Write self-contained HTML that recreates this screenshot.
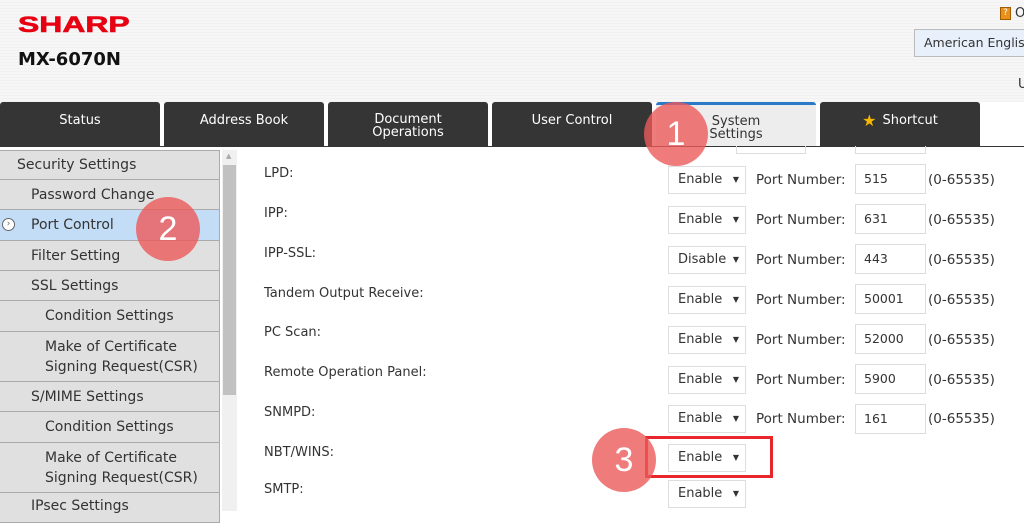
<!DOCTYPE html>
<html><head><style>
*{margin:0;padding:0;box-sizing:border-box}
body{width:1024px;height:511px;overflow:hidden;position:relative;background:#fff;font-family:"DejaVu Sans","Liberation Sans",sans-serif;color:#333}
.hdr{position:absolute;left:0;top:0;width:1024px;height:102px;background:repeating-linear-gradient(#f6f6f6 0 2px,#f1f1f1 2px 3px)}
.abs{position:absolute}
.tab{position:absolute;top:102px;height:44px;width:160px;background:#353535;color:#fff;font-size:13px;text-align:center;border-radius:3px 3px 0 0;line-height:13px;display:flex;align-items:center;justify-content:center;padding-bottom:8px}
.tab.two{padding-bottom:0;padding-top:4px}
.menu{position:absolute;left:0;width:220px;background:#e0e0e0;border-bottom:1px solid #aaa;border-right:1px solid #aaa;font-size:14px;color:#333;display:flex;align-items:center}
.lbl{position:absolute;left:264px;font-size:13px;color:#333}
.sel{position:absolute;left:668px;width:78px;height:28px;border:1px solid #ddd;font-size:13px;color:#333;padding-left:9px;line-height:26px;background:#fff}
.sel:after{content:"▼";position:absolute;right:6px;font-size:8px;top:0}
.pn{position:absolute;left:756px;font-size:13.5px;color:#333}
.inp{position:absolute;left:855px;width:71px;height:30px;border:1px solid #ddd;font-size:12.5px;padding-left:8px;line-height:28px;color:#333}
.rng{position:absolute;left:928px;font-size:13.5px;color:#333}
.circ{position:absolute;width:64px;height:64px;border-radius:50%;background:rgba(236,90,90,0.8);color:#fff;font-size:34px;text-align:center;line-height:64px;font-family:"Liberation Sans",sans-serif}
</style></head><body>
<div class="hdr"></div>
<div class="abs" style="left:18px;top:12px;font:900 22px 'Liberation Sans',sans-serif;color:#e60012;transform:scaleX(1.45);transform-origin:0 0;-webkit-text-stroke:0.6px #e60012">SHARP</div>
<div class="abs" style="left:18px;top:49px;font:bold 18px 'DejaVu Sans',sans-serif;color:#111">MX-6070N</div>
<div class="abs" style="left:1000px;top:7px;width:11px;height:13px;background:#e8901a;border:1px solid #a05a00;color:#fff;font-size:9px;text-align:center;line-height:11px">?</div>
<div class="abs" style="left:1015px;top:6px;font-size:13px">O</div>
<div class="abs" style="left:914px;top:29px;width:120px;height:28px;background:#e8f0fb;border:1px solid #bbb;font-size:12.5px;padding-left:9px;line-height:26px">American English</div>
<div class="abs" style="left:1018px;top:77px;font-size:13px">U</div>

<div class="tab" style="left:0">Status</div>
<div class="tab" style="left:164px">Address Book</div>
<div class="tab two" style="left:328px">Document<br>Operations</div>
<div class="tab" style="left:492px">User Control</div>
<div class="tab two" style="left:656px;background:#ededed;color:#333;border-top:3px solid #2a7ac8">System<br>Settings</div>
<div class="tab" style="left:820px"><span style="color:#f5b800;font-size:16px;margin-right:6px">★</span>Shortcut</div>
<div class="abs" style="left:0;top:146px;width:1024px;height:1px;background:#353535"></div>

<div class="menu" style="top:150px;height:30px;padding-left:17px;border-top:1px solid #aaa">Security Settings</div>
<div class="menu" style="top:180px;height:30px;padding-left:31px">Password Change</div>
<div class="menu" style="top:210px;height:31px;padding-left:31px;background:#c3ddf6">Port Control</div>
<div class="abs" style="left:2px;top:218px;width:13px;height:13px;border-radius:50%;border:1.5px solid #666;background:#fff;font-size:9px;line-height:10px;text-align:center;color:#666">›</div>
<div class="menu" style="top:241px;height:30px;padding-left:31px">Filter Setting</div>
<div class="menu" style="top:271px;height:30px;padding-left:31px">SSL Settings</div>
<div class="menu" style="top:301px;height:31px;padding-left:45px">Condition Settings</div>
<div class="menu" style="top:332px;height:50px;padding-left:45px;line-height:20px">Make of Certificate<br>Signing Request(CSR)</div>
<div class="menu" style="top:382px;height:30px;padding-left:31px">S/MIME Settings</div>
<div class="menu" style="top:412px;height:31px;padding-left:45px">Condition Settings</div>
<div class="menu" style="top:443px;height:50px;padding-left:45px;line-height:20px">Make of Certificate<br>Signing Request(CSR)</div>
<div class="menu" style="top:493px;height:30px;padding-left:31px;align-items:flex-start;padding-top:5px">IPsec Settings</div>
<div class="abs" style="left:222px;top:150px;width:15px;height:361px;background:#f0f0f0"></div>
<div class="abs" style="left:223px;top:165px;width:13px;height:230px;background:#c1c1c1"></div>
<div class="abs" style="left:226px;top:152px;font-size:7px;color:#aaa">▲</div>

<div class="abs" style="left:736px;top:146px;width:70px;height:8px;border:1px solid #ddd;border-top:none"></div>
<div class="abs" style="left:855px;top:146px;width:71px;height:8px;border:1px solid #ddd;border-top:none"></div>

<div class="lbl" style="top:166px">LPD:</div>
<div class="sel" style="top:166px">Enable</div><div class="pn" style="top:172px">Port Number:</div><div class="inp" style="top:164px">515</div><div class="rng" style="top:172px">(0-65535)</div>
<div class="lbl" style="top:206px">IPP:</div>
<div class="sel" style="top:206px">Enable</div><div class="pn" style="top:212px">Port Number:</div><div class="inp" style="top:204px">631</div><div class="rng" style="top:212px">(0-65535)</div>
<div class="lbl" style="top:246px">IPP-SSL:</div>
<div class="sel" style="top:246px">Disable</div><div class="pn" style="top:252px">Port Number:</div><div class="inp" style="top:244px">443</div><div class="rng" style="top:252px">(0-65535)</div>
<div class="lbl" style="top:286px">Tandem Output Receive:</div>
<div class="sel" style="top:286px">Enable</div><div class="pn" style="top:292px">Port Number:</div><div class="inp" style="top:284px">50001</div><div class="rng" style="top:292px">(0-65535)</div>
<div class="lbl" style="top:325px">PC Scan:</div>
<div class="sel" style="top:326px">Enable</div><div class="pn" style="top:332px">Port Number:</div><div class="inp" style="top:324px">52000</div><div class="rng" style="top:332px">(0-65535)</div>
<div class="lbl" style="top:365px">Remote Operation Panel:</div>
<div class="sel" style="top:366px">Enable</div><div class="pn" style="top:372px">Port Number:</div><div class="inp" style="top:364px">5900</div><div class="rng" style="top:372px">(0-65535)</div>
<div class="lbl" style="top:405px">SNMPD:</div>
<div class="sel" style="top:405px">Enable</div><div class="pn" style="top:411px">Port Number:</div><div class="inp" style="top:404px">161</div><div class="rng" style="top:411px">(0-65535)</div>
<div class="lbl" style="top:445px">NBT/WINS:</div>
<div class="sel" style="top:444px">Enable</div>
<div class="lbl" style="top:482px">SMTP:</div>
<div class="sel" style="top:480px">Enable</div>
<div class="abs" style="left:645px;top:436px;width:128px;height:42px;border:3px solid #e8262b"></div>

<div class="circ" style="left:644px;top:102px">1</div>
<div class="circ" style="left:136px;top:197px">2</div>
<div class="circ" style="left:592px;top:428px">3</div>
</body></html>
